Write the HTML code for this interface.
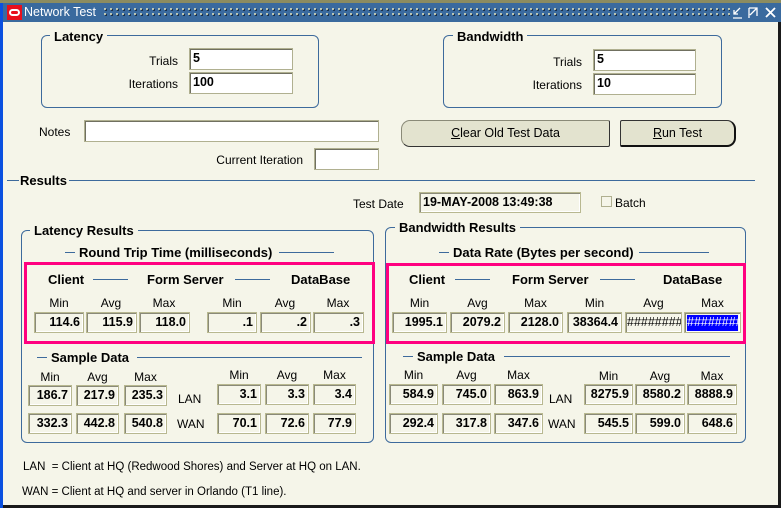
<!DOCTYPE html>
<html><head><meta charset="utf-8"><style>
*{margin:0;padding:0;box-sizing:border-box}
body{width:781px;height:508px;overflow:hidden;background:#f5f5e9;font-family:"Liberation Sans",sans-serif;font-size:12px;color:#000;position:relative}
.a{position:absolute;white-space:nowrap}
.box{position:absolute;border:1px solid #3d6a9c;border-radius:6px}
.lg{position:absolute;background:#f5f5e9;font-weight:bold;font-size:13px;padding:0 4px;line-height:14px}
.in{position:absolute;background:#fff;border:1px solid #b0b090;box-shadow:inset 1px 1px 0 #707060;font-weight:bold;font-size:12.5px;padding-left:3px;line-height:19px}
.ro{position:absolute;background:#f5f5e9;border:1px solid #b8b890;box-shadow:inset 1px 1px 0 #8a8a78,inset -1px -1px 0 #fff;font-weight:bold;font-size:12.5px;text-align:right;padding-right:3px;line-height:19px;height:21px}
.r{text-align:right}
.c{text-align:center}
.hl{position:absolute;height:1px;background:#3d6a9c}
.pk{position:absolute;border:3px solid #ff0080}
.b{font-weight:bold;font-size:13px}
</style></head><body>
<div class="a" style="left:0;top:0;width:781px;height:3px;background:#8c8c60"></div>
<div class="a" style="left:0;top:3px;width:781px;height:19px;background:#3a6a9e"></div>
<div class="a" style="left:7px;top:5px;width:15px;height:15px;background:#e8101c"></div>
<div class="a" style="left:9px;top:9px;width:11px;height:7px;border:2px solid #fff;border-radius:4px"></div>
<div class="a" style="left:24px;top:5px;color:#fff;font-size:12.5px">Network Test</div>
<div class="a" style="left:104px;top:8px;width:626px;height:10px;background-image:radial-gradient(circle at 1px 1px,#e8e8c0 0.9px,transparent 1px),radial-gradient(circle at 2px 2px,#102030 0.9px,transparent 1px);background-size:6px 5px"></div>
<svg class="a" style="left:730px;top:5px" width="50" height="16" viewBox="0 0 50 16" fill="none" stroke="#fff" stroke-width="1.3"><path d="M10 3 L4 9 M4 5 V9 H8 M3 13 H12"/><path d="M19 3 H27 V11 M27 3 L20 10 M19 3 V13" /><path d="M36 3 L45 12 M45 3 L36 12" stroke-width="1.8"/></svg>
<div class="a" style="left:0;top:3px;width:3px;height:505px;background:#0a50e0"></div>
<div class="a" style="left:778px;top:22px;width:3px;height:486px;background:#1a1a1a"></div>
<div class="a" style="left:3px;top:505px;width:778px;height:3px;background:#1a1a1a"></div>

<div class="box" style="left:41px;top:35px;width:278px;height:73px"></div>
<div class="lg" style="left:50px;top:30px">Latency</div>
<div class="a r" style="left:100px;top:54px;width:78px">Trials</div>
<div class="a r" style="left:100px;top:77px;width:78px">Iterations</div>
<div class="in" style="left:189px;top:48px;width:104px;height:22px">5</div>
<div class="in" style="left:189px;top:72px;width:104px;height:22px">100</div>

<div class="box" style="left:443px;top:35px;width:279px;height:73px"></div>
<div class="lg" style="left:453px;top:30px">Bandwidth</div>
<div class="a r" style="left:500px;top:55px;width:82px">Trials</div>
<div class="a r" style="left:500px;top:78px;width:82px">Iterations</div>
<div class="in" style="left:593px;top:49px;width:103px;height:22px">5</div>
<div class="in" style="left:593px;top:73px;width:103px;height:22px">10</div>

<div class="a" style="left:39px;top:125px">Notes</div>
<div class="in" style="left:84px;top:120px;width:295px;height:22px"></div>
<div class="a r" style="left:180px;top:153px;width:123px">Current Iteration</div>
<div class="in" style="left:314px;top:148px;width:65px;height:22px"></div>
<div class="a c" style="left:401px;top:120px;width:209px;height:27px;background:#e3e3cf;border:1px solid #8a8a78;border-right:1px solid #333;border-bottom:1px solid #333;border-radius:9px 2px 2px 9px;line-height:25px;font-size:12.5px"><u>C</u>lear Old Test Data</div>
<div class="a c" style="left:620px;top:120px;width:116px;height:27px;background:#e3e3cf;border:1px solid #333;border-right:2px solid #111;border-bottom:2px solid #111;border-radius:2px 9px 9px 2px;line-height:24px;font-size:12.5px"><u>R</u>un Test</div>

<div class="hl" style="left:7px;top:180px;width:12px"></div>
<div class="a b" style="left:20px;top:173px">Results</div>
<div class="hl" style="left:69px;top:180px;width:686px"></div>
<div class="a" style="left:353px;top:197px">Test Date</div>
<div class="ro" style="left:419px;top:192px;width:162px;text-align:left;padding-left:3px">19-MAY-2008 13:49:38</div>
<div class="a" style="left:601px;top:196px;width:11px;height:11px;border:1px solid #b0b090;background:#f5f5e9"></div>
<div class="a" style="left:615px;top:196px">Batch</div>

<!-- Latency results -->
<div class="box" style="left:21px;top:230px;width:353px;height:213px"></div>
<div class="lg" style="left:30px;top:224px">Latency Results</div>
<div class="hl" style="left:65px;top:252px;width:10px"></div>
<div class="a b" style="left:79px;top:245px">Round Trip Time (milliseconds)</div>
<div class="hl" style="left:279px;top:252px;width:55px"></div>
<div class="pk" style="left:24px;top:262px;width:351px;height:82px"></div>
<div class="a b" style="left:48px;top:272px">Client</div>
<div class="hl" style="left:93px;top:279px;width:35px"></div>
<div class="a b" style="left:147px;top:272px">Form Server</div>
<div class="hl" style="left:235px;top:279px;width:35px"></div>
<div class="a b" style="left:291px;top:272px">DataBase</div>
<div class="a c" style="left:34px;top:296px;width:50px">Min</div>
<div class="a c" style="left:86px;top:296px;width:50px">Avg</div>
<div class="a c" style="left:139px;top:296px;width:50px">Max</div>
<div class="a c" style="left:207px;top:296px;width:50px">Min</div>
<div class="a c" style="left:260px;top:296px;width:50px">Avg</div>
<div class="a c" style="left:313px;top:296px;width:50px">Max</div>
<div class="ro" style="left:34px;top:312px;width:50px">114.6</div>
<div class="ro" style="left:86px;top:312px;width:51px">115.9</div>
<div class="ro" style="left:139px;top:312px;width:51px">118.0</div>
<div class="ro" style="left:207px;top:312px;width:50px">.1</div>
<div class="ro" style="left:260px;top:312px;width:51px">.2</div>
<div class="ro" style="left:313px;top:312px;width:51px">.3</div>
<div class="hl" style="left:37px;top:357px;width:10px"></div>
<div class="a b" style="left:51px;top:350px">Sample Data</div>
<div class="hl" style="left:137px;top:357px;width:225px"></div>
<div class="a c" style="left:28px;top:370px;width:44px">Min</div>
<div class="a c" style="left:76px;top:370px;width:43px">Avg</div>
<div class="a c" style="left:124px;top:370px;width:43px">Max</div>
<div class="a c" style="left:217px;top:368px;width:44px">Min</div>
<div class="a c" style="left:265px;top:368px;width:44px">Avg</div>
<div class="a c" style="left:313px;top:368px;width:43px">Max</div>
<div class="ro" style="left:28px;top:385px;width:44px">186.7</div>
<div class="ro" style="left:76px;top:385px;width:43px">217.9</div>
<div class="ro" style="left:124px;top:385px;width:43px">235.3</div>
<div class="a" style="left:178px;top:392px">LAN</div>
<div class="ro" style="left:217px;top:384px;width:44px">3.1</div>
<div class="ro" style="left:265px;top:384px;width:44px">3.3</div>
<div class="ro" style="left:313px;top:384px;width:43px">3.4</div>
<div class="ro" style="left:28px;top:413px;width:44px">332.3</div>
<div class="ro" style="left:76px;top:413px;width:43px">442.8</div>
<div class="ro" style="left:124px;top:413px;width:43px">540.8</div>
<div class="a" style="left:177px;top:417px">WAN</div>
<div class="ro" style="left:217px;top:413px;width:44px">70.1</div>
<div class="ro" style="left:265px;top:413px;width:44px">72.6</div>
<div class="ro" style="left:313px;top:413px;width:43px">77.9</div>

<!-- Bandwidth results -->
<div class="box" style="left:385px;top:227px;width:361px;height:216px"></div>
<div class="lg" style="left:395px;top:221px">Bandwidth Results</div>
<div class="hl" style="left:439px;top:252px;width:10px"></div>
<div class="a b" style="left:453px;top:245px">Data Rate (Bytes per second)</div>
<div class="hl" style="left:639px;top:252px;width:70px"></div>
<div class="pk" style="left:386px;top:263px;width:360px;height:81px"></div>
<div class="a b" style="left:409px;top:272px">Client</div>
<div class="hl" style="left:455px;top:279px;width:35px"></div>
<div class="a b" style="left:512px;top:272px">Form Server</div>
<div class="hl" style="left:600px;top:279px;width:35px"></div>
<div class="a b" style="left:663px;top:272px">DataBase</div>
<div class="a c" style="left:392px;top:296px;width:55px">Min</div>
<div class="a c" style="left:450px;top:296px;width:55px">Avg</div>
<div class="a c" style="left:508px;top:296px;width:55px">Max</div>
<div class="a c" style="left:567px;top:296px;width:55px">Min</div>
<div class="a c" style="left:625px;top:296px;width:57px">Avg</div>
<div class="a c" style="left:684px;top:296px;width:57px">Max</div>
<div class="ro" style="left:392px;top:312px;width:55px">1995.1</div>
<div class="ro" style="left:450px;top:312px;width:55px">2079.2</div>
<div class="ro" style="left:508px;top:312px;width:55px">2128.0</div>
<div class="ro" style="left:567px;top:312px;width:55px">38364.4</div>
<div class="ro" style="left:625px;top:312px;width:57px;overflow:hidden;text-align:left;padding-left:1px;font-weight:normal">#########</div>
<div class="ro" style="left:684px;top:312px;width:57px;overflow:hidden;padding:2px 2px;line-height:15px;text-align:left;font-weight:normal"><span style="display:block;background:#0000ff;color:#fff;height:16px">#########</span></div>
<div class="hl" style="left:403px;top:356px;width:10px"></div>
<div class="a b" style="left:417px;top:349px">Sample Data</div>
<div class="hl" style="left:504px;top:356px;width:226px"></div>
<div class="a c" style="left:389px;top:368px;width:49px">Min</div>
<div class="a c" style="left:442px;top:368px;width:49px">Avg</div>
<div class="a c" style="left:494px;top:368px;width:49px">Max</div>
<div class="a c" style="left:584px;top:369px;width:49px">Min</div>
<div class="a c" style="left:635px;top:369px;width:50px">Avg</div>
<div class="a c" style="left:687px;top:369px;width:50px">Max</div>
<div class="ro" style="left:389px;top:384px;width:49px">584.9</div>
<div class="ro" style="left:442px;top:384px;width:49px">745.0</div>
<div class="ro" style="left:494px;top:384px;width:49px">863.9</div>
<div class="a" style="left:549px;top:392px">LAN</div>
<div class="ro" style="left:584px;top:384px;width:49px">8275.9</div>
<div class="ro" style="left:635px;top:384px;width:50px">8580.2</div>
<div class="ro" style="left:687px;top:384px;width:50px">8888.9</div>
<div class="ro" style="left:389px;top:413px;width:49px">292.4</div>
<div class="ro" style="left:442px;top:413px;width:49px">317.8</div>
<div class="ro" style="left:494px;top:413px;width:49px">347.6</div>
<div class="a" style="left:548px;top:417px">WAN</div>
<div class="ro" style="left:584px;top:413px;width:49px">545.5</div>
<div class="ro" style="left:635px;top:413px;width:50px">599.0</div>
<div class="ro" style="left:687px;top:413px;width:50px">648.6</div>

<div class="a" style="left:23px;top:461px;font-size:11.5px">LAN&nbsp; = Client at HQ (Redwood Shores) and Server at HQ on LAN.</div>
<div class="a" style="left:22px;top:486px;font-size:11.5px">WAN = Client at HQ and server in Orlando (T1 line).</div>
</body></html>
